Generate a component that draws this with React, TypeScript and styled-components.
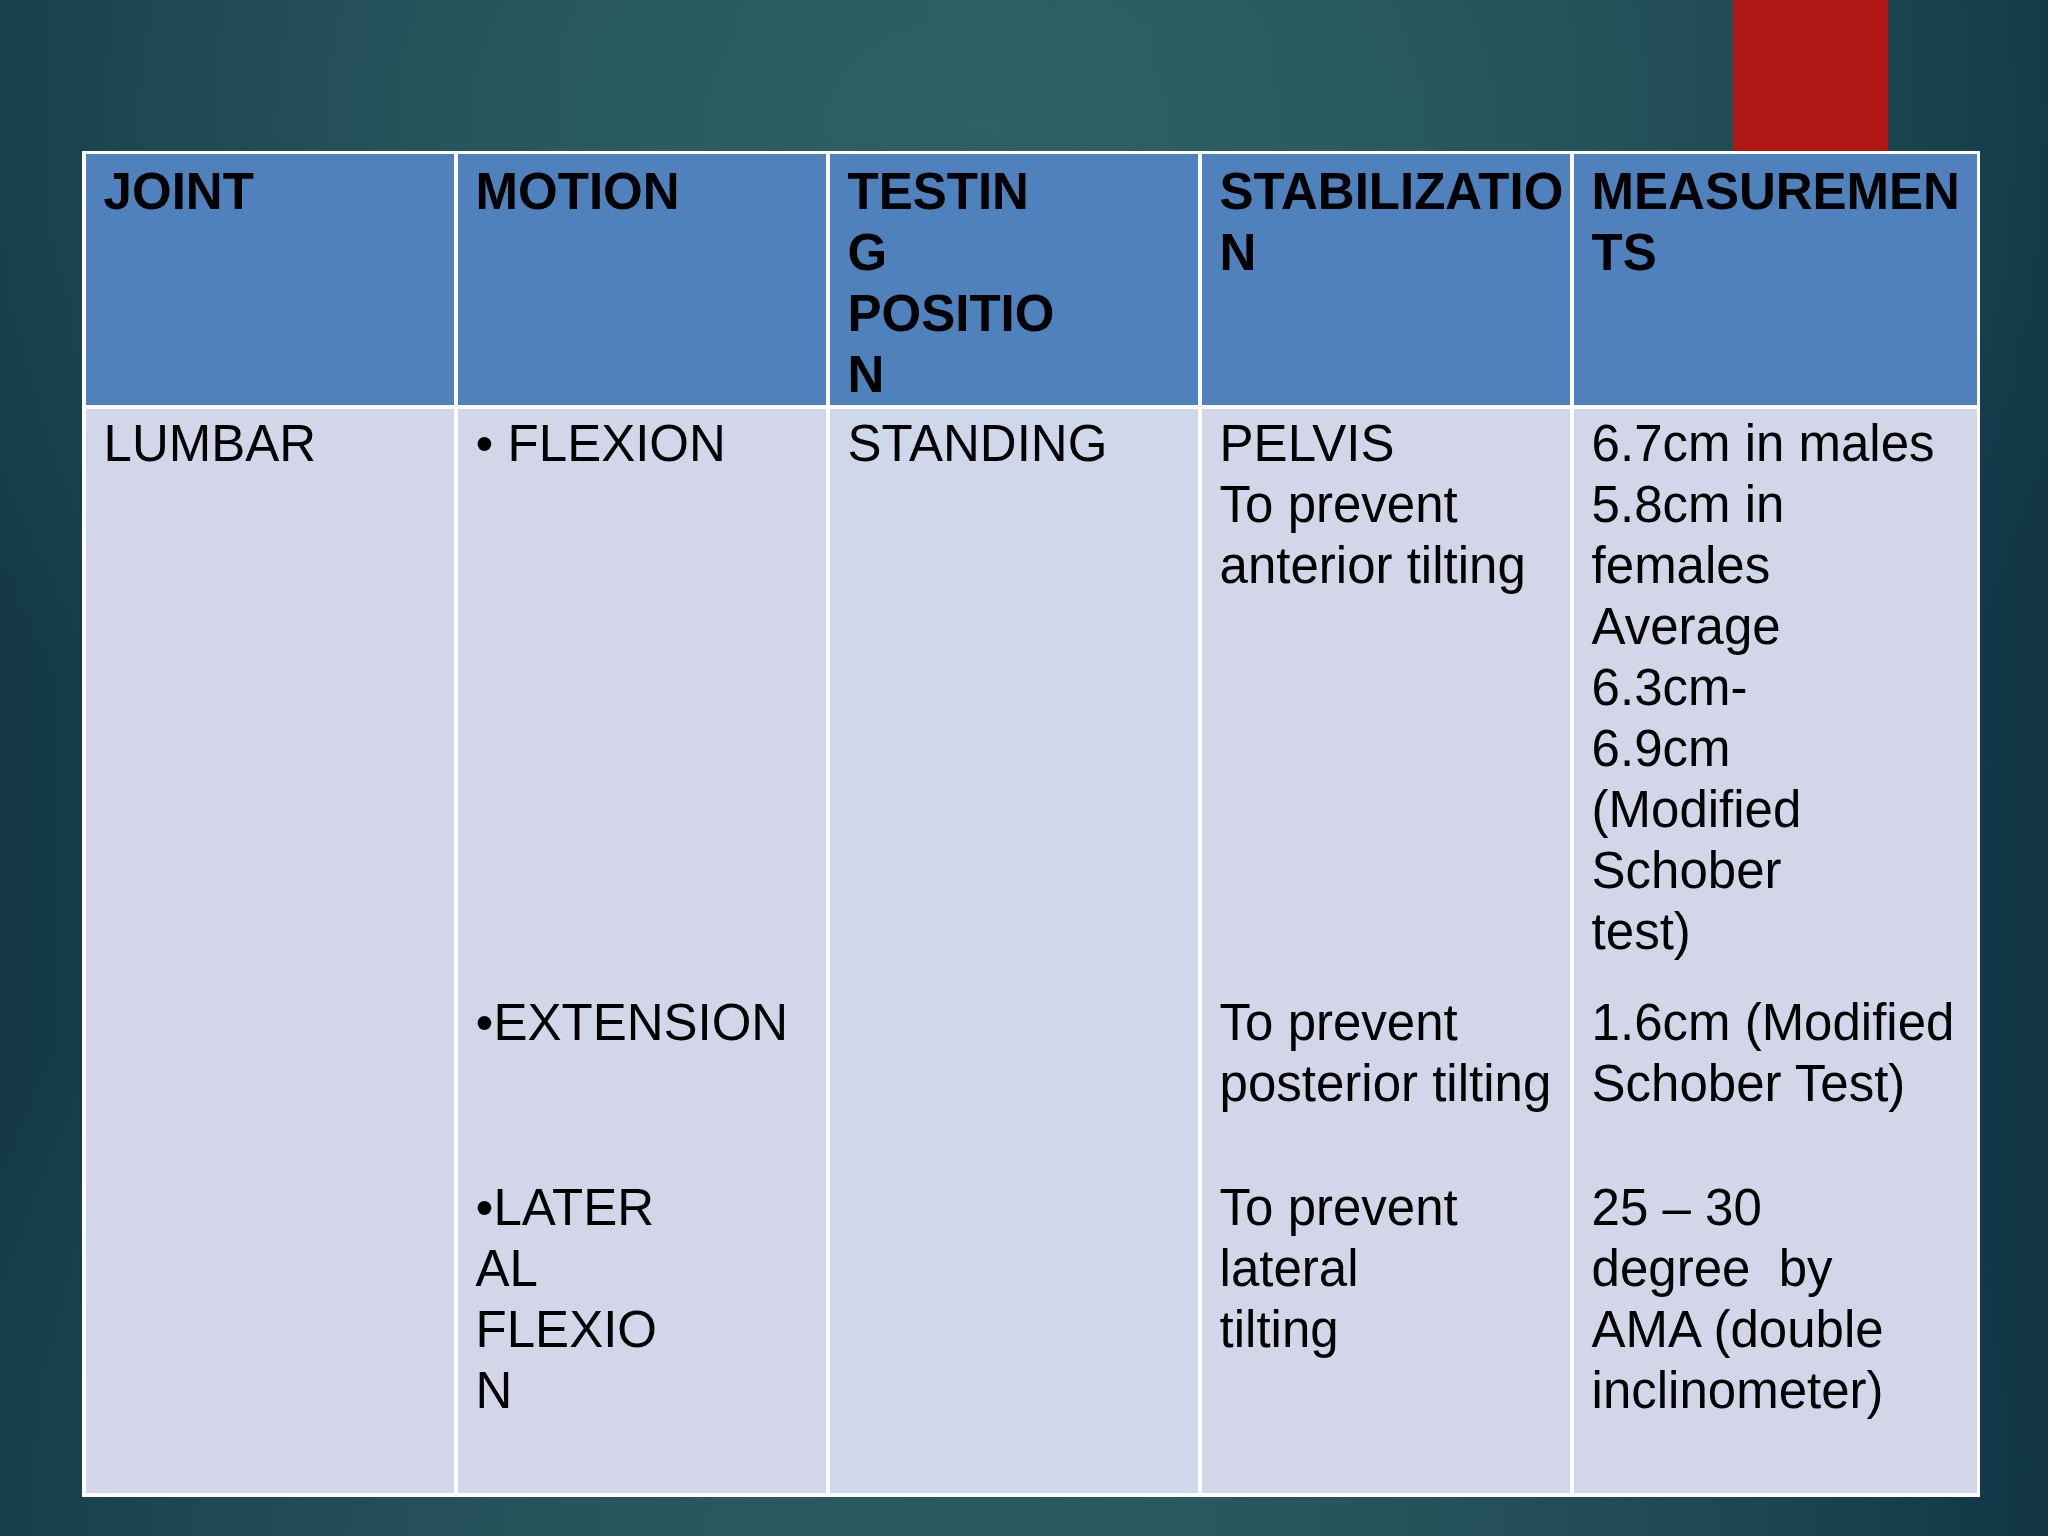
import * as React from "react";
import styled, { createGlobalStyle } from "styled-components";

const GlobalStyle = createGlobalStyle`
  html, body {
    margin: 0;
    padding: 0;
    background: #143a48;
  }
`;

const Slide = styled.div`
  width: 2048px;
  height: 1536px;
  box-sizing: border-box;
  padding-left: 82px;
  display: flex;
  flex-direction: column;
  overflow: hidden;
  font-family: "Liberation Sans", Arial, sans-serif;
  background:
    radial-gradient(ellipse 60% 55% at 48% 8%, rgba(47, 98, 100, 0.9) 0%, rgba(47, 98, 100, 0) 100%),
    radial-gradient(ellipse 55% 50% at 45% 100%, rgba(44, 92, 96, 0.85) 0%, rgba(44, 92, 96, 0) 100%),
    linear-gradient(90deg, #143848 0%, #1f4c56 30%, #23535a 55%, #1a4450 80%, #113545 100%);
`;

const TopBand = styled.div`
  height: 151px;
  flex-shrink: 0;
  display: flex;
  padding-left: 1651px;
`;

const RedBar = styled.div`
  width: 155px;
  height: 100%;
  background: #b01816;
`;

const Table = styled.div`
  width: 1898px;
  box-sizing: border-box;
  padding: 3px 3.3px 3.4px 3.6px;
  background: #ffffff;
  display: flex;
  flex-direction: column;
  gap: 9px;
`;

const HeaderRow = styled.div`
  display: grid;
  grid-template-columns: repeat(4, 368.5px) 1fr;
  column-gap: 3.5px;
  height: 246px;
`;

const HeadCell = styled.div`
  background: #4f81bd;
  padding: 7px 0 0 18px;
  color: #000;
  font-size: 51px;
  line-height: 61px;
  font-weight: 700;
  white-space: nowrap;
`;

const BodyGrid = styled.div`
  display: grid;
  grid-template-columns: repeat(4, 368.5px) 1fr;
  grid-template-rows: 579px 185px 1fr;
  column-gap: 3.5px;
  height: 1084.3px;
`;

const BodyCell = styled.div<{ $col: number; $row: number; $span: number; $tint?: boolean }>`
  grid-column: ${({ $col }) => $col};
  grid-row: ${({ $row, $span }) => `${$row} / span ${$span}`};
  background: ${({ $tint }) => ($tint ? "#cfd7ea" : "#d3d6e9")};
  padding: 4px 0 0 18px;
  color: #000;
  font-size: 51px;
  line-height: 61px;
  font-weight: 400;
`;

const Line = styled.div`
  white-space: pre;
`;

const headers: string[][] = [
  ["JOINT"],
  ["MOTION"],
  ["TESTIN", "G", "POSITIO", "N"],
  ["STABILIZATIO", "N"],
  ["MEASUREMEN", "TS"],
];

interface ICell {
  col: number;
  row: number;
  span: number;
  lines: string[];
}

const cells: ICell[] = [
  { col: 1, row: 1, span: 3, lines: ["LUMBAR"] },
  { col: 2, row: 1, span: 1, lines: ["• FLEXION"] },
  { col: 2, row: 2, span: 1, lines: ["•EXTENSION"] },
  { col: 2, row: 3, span: 1, lines: ["•LATER", "AL", "FLEXIO", "N"] },
  { col: 3, row: 1, span: 3, lines: ["STANDING"] },
  { col: 4, row: 1, span: 1, lines: ["PELVIS", "To prevent", "anterior tilting"] },
  { col: 4, row: 2, span: 1, lines: ["To prevent", "posterior tilting"] },
  { col: 4, row: 3, span: 1, lines: ["To prevent", "lateral", "tilting"] },
  {
    col: 5,
    row: 1,
    span: 1,
    lines: [
      "6.7cm in males",
      "5.8cm in",
      "females",
      "Average",
      "6.3cm-",
      "6.9cm",
      "(Modified",
      "Schober",
      "test)",
    ],
  },
  { col: 5, row: 2, span: 1, lines: ["1.6cm (Modified", "Schober Test)"] },
  { col: 5, row: 3, span: 1, lines: ["25 – 30", "degree  by", "AMA (double", "inclinometer)"] },
];

export default function App() {
  return (
    <>
      <GlobalStyle />
      <Slide>
        <TopBand>
          <RedBar />
        </TopBand>
        <Table>
          <HeaderRow>
            {headers.map((lines, i) => (
              <HeadCell key={i}>
                {lines.map((l, j) => (
                  <Line key={j}>{l}</Line>
                ))}
              </HeadCell>
            ))}
          </HeaderRow>
          <BodyGrid>
            {cells.map((c, i) => (
              <BodyCell key={i} $col={c.col} $row={c.row} $span={c.span} $tint={c.col === 3}>
                {c.lines.map((l, j) => (
                  <Line key={j}>{l}</Line>
                ))}
              </BodyCell>
            ))}
          </BodyGrid>
        </Table>
      </Slide>
    </>
  );
}
